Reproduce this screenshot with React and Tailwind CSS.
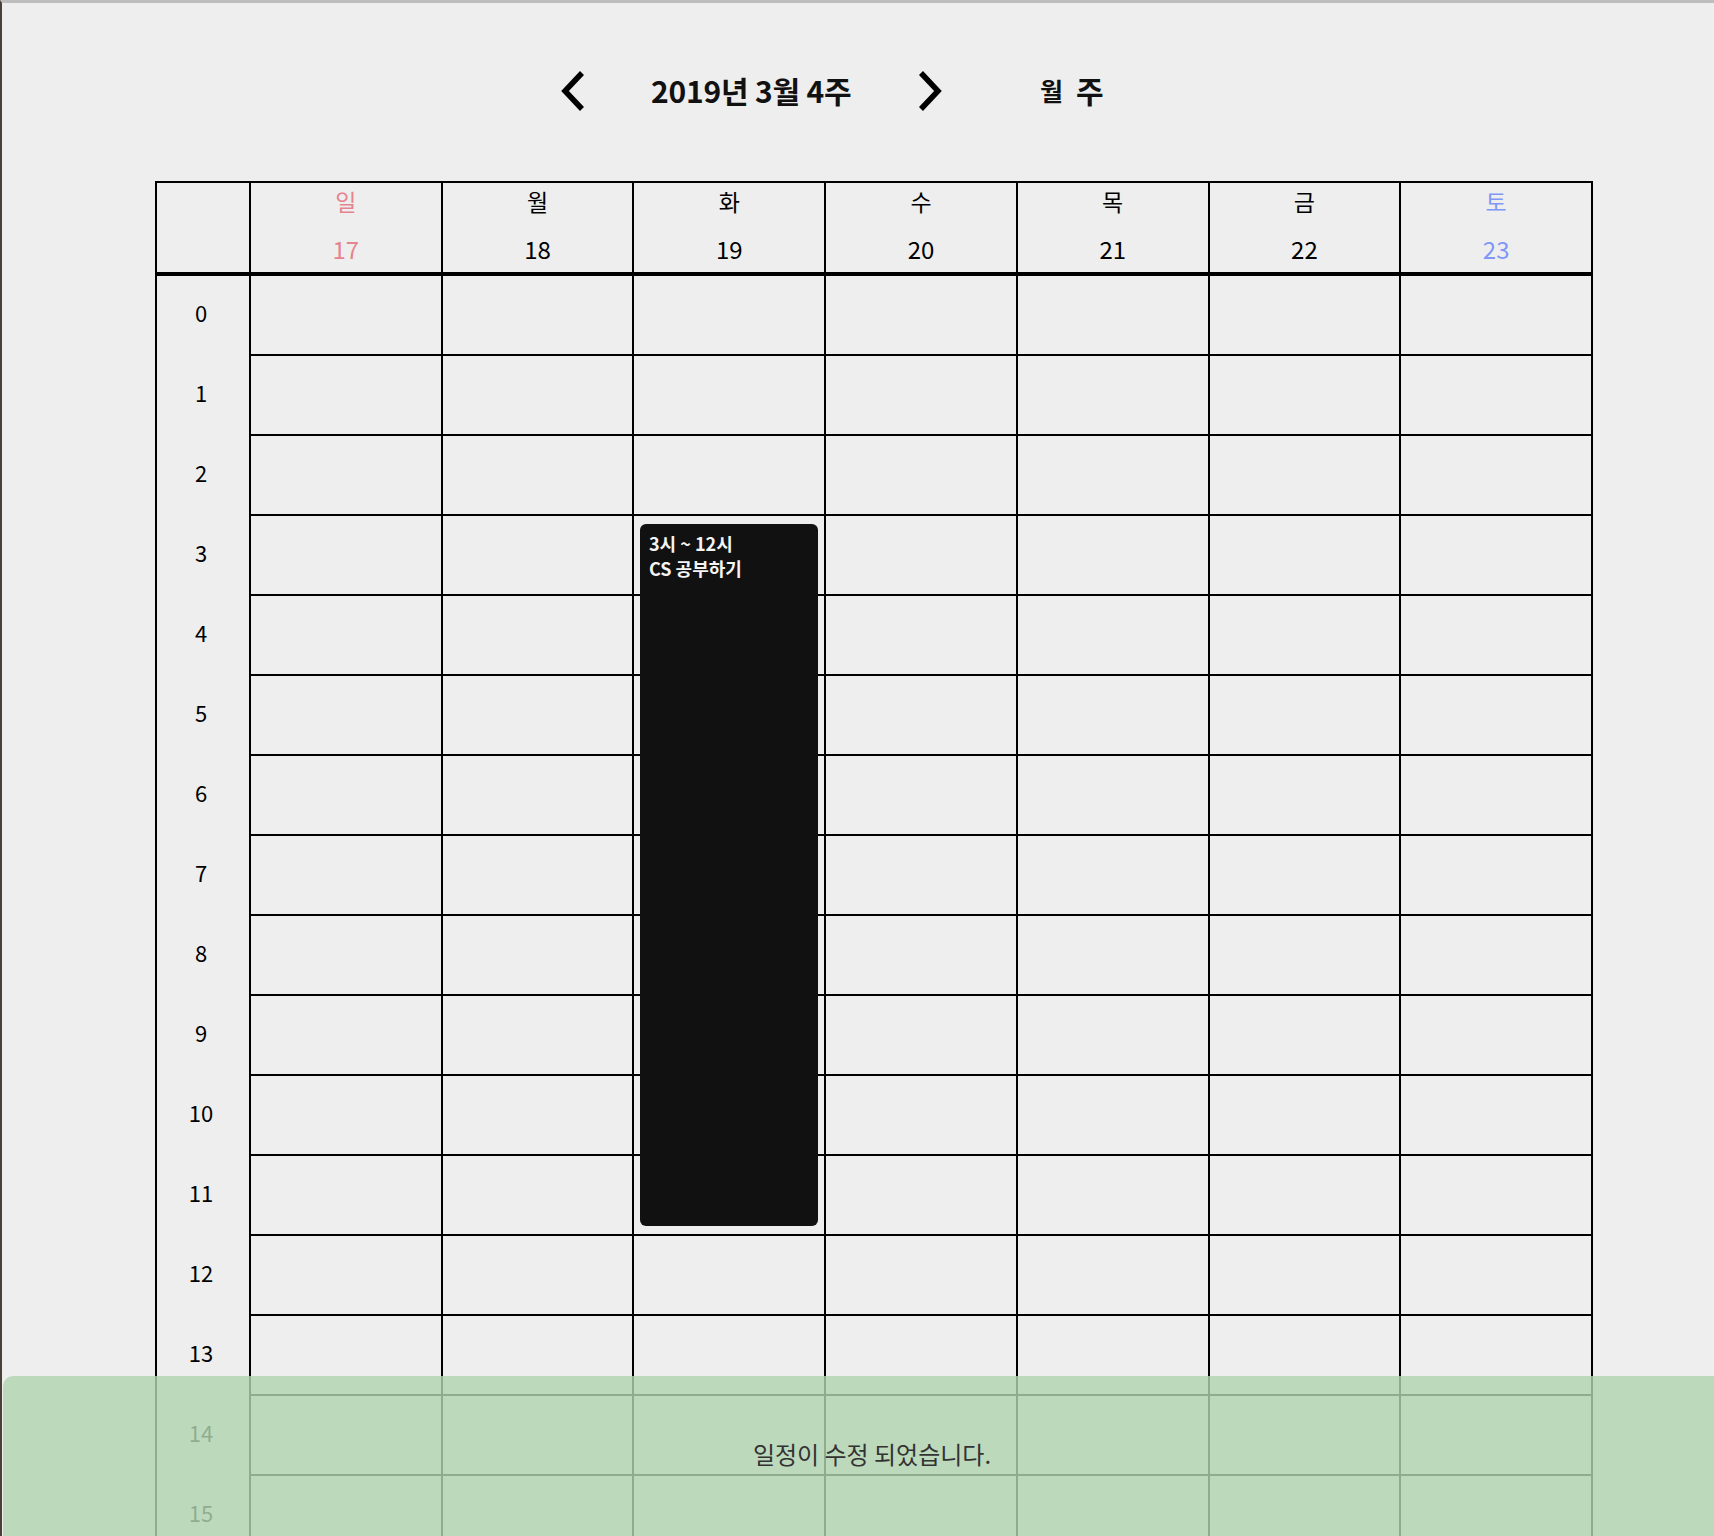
import React from 'react';

const days = [
  { name: '일', date: 17, color: 'text-[#e7838f]' },
  { name: '월', date: 18, color: 'text-black' },
  { name: '화', date: 19, color: 'text-black' },
  { name: '수', date: 20, color: 'text-black' },
  { name: '목', date: 21, color: 'text-black' },
  { name: '금', date: 22, color: 'text-black' },
  { name: '토', date: 23, color: 'text-[#7f97f7]' },
];

const hours = Array.from({ length: 24 }, (_, i) => i);

const Chevron = ({ dir }) => (
  <svg width="24" height="40" viewBox="0 0 24 40" className="shrink-0">
    <path
      d={dir === 'left' ? 'M21 2 L4 20 L21 38' : 'M3 2 L20 20 L3 38'}
      fill="none"
      stroke="black"
      strokeWidth="5.5"
      strokeLinejoin="miter"
    />
  </svg>
);

const App = () => {
  return (
    <div
      className="relative w-[1714px] h-[1536px] overflow-hidden bg-[#eeeeee] border-t-[3px] border-[#bdbdbd] border-l-2 border-l-[#4a4038]"
      style={{ fontFamily: '"Noto Sans CJK KR", "Noto Sans", sans-serif' }}
    >
      {/* header: week navigation + view toggle */}
      <div className="pt-[67px] pl-[559px] h-[109px] flex items-center">
        <Chevron dir="left" />
        <h1 className="ml-[66px] w-[204px] text-[30px] font-bold tracking-[-0.2px] leading-none whitespace-nowrap text-[#111] -mt-[2px]">
          2019년 3월 4주
        </h1>
        <div className="ml-[63px]">
          <Chevron dir="right" />
        </div>
        <div className="ml-[98px] flex items-center gap-[13px] font-bold text-[#111] leading-none -mt-[2px]">
          <button className="text-[25px]">월</button>
          <button className="text-[30px]">주</button>
        </div>
      </div>

      {/* weekly table */}
      <div className="mt-[69px] ml-[153px] w-[1438px] border-x-2 border-t-2 border-black">
        <div className="grid grid-cols-[92px_repeat(7,1fr)] h-[93px] border-b-4 border-black">
          <div />
          {days.map((d) => (
            <div key={d.name} className={`border-l-2 border-black flex flex-col items-center ${d.color}`}>
              <span className="mt-[4px] text-[23px] leading-[28px]">{d.name}</span>
              <span className="mt-[20px] text-[24px] leading-[28px]">{d.date}</span>
            </div>
          ))}
        </div>

        <div className="relative">
          {hours.map((h) => (
            <div key={h} className="grid grid-cols-[92px_repeat(7,1fr)] h-[80px]">
              <div className="flex items-center justify-center pb-[7px] pr-[4px] text-[22px] text-black">{h}</div>
              {days.map((d) => (
                <div key={d.name} className="border-l-2 border-b-2 border-black" />
              ))}
            </div>
          ))}

          {/* event block */}
          <div className="absolute left-[483px] top-[248px] w-[178px] h-[702px] rounded-[6px] bg-[#111111] pl-[9px] pt-[7px] text-[18px] leading-[25px] font-semibold text-[#f4f4f4]">
            <div>3시 ~ 12시</div>
            <div>CS 공부하기</div>
          </div>
        </div>
      </div>

      {/* toast */}
      <div className="absolute left-[1px] top-[1373px] w-[1738px] h-[220px] rounded-[10px] bg-[rgba(177,212,176,0.81)] flex justify-center pt-[62px]">
        <p className="text-[24px] leading-[32px] text-[#333]">일정이 수정 되었습니다.</p>
      </div>
    </div>
  );
};

export default App;
